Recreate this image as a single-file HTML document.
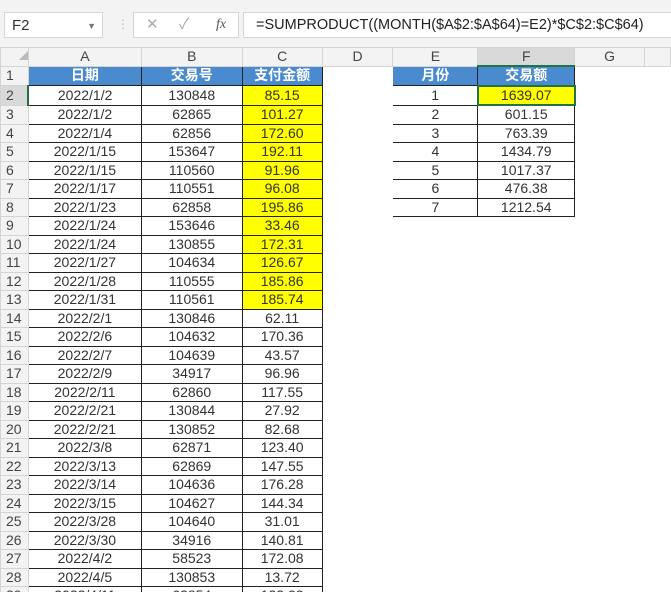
<!DOCTYPE html><html><head><meta charset="utf-8"><style>
body{margin:0;width:671px;height:592px;overflow:hidden;background:#fff;font-family:"Liberation Sans","Noto Sans CJK SC",sans-serif;position:relative}
.top{position:absolute;left:0;top:0;width:671px;height:48px;background:#f3f3f3;border-bottom:1px solid #dadada}
.nb{position:absolute;left:4px;top:12px;width:99px;height:26px;background:#fff;border:1px solid #d6d6d6;font-size:15px;line-height:26px;color:#333;box-sizing:border-box;padding-left:7px}
.nb span{position:absolute;right:6px;top:0;font-size:9px;color:#777}
.ib{position:absolute;left:133px;top:12px;width:106px;height:26px;background:#fff;border:1px solid #d6d6d6;box-sizing:border-box;color:#aaa;font-size:15px;line-height:24px}
.fb{position:absolute;left:243px;top:12px;width:440px;height:26px;background:#fff;border:1px solid #d6d6d6;box-sizing:border-box;font-size:14.5px;line-height:24px;color:#222;padding-left:12px}
.grid{position:absolute;left:0;top:47px;width:671px;height:545px;overflow:hidden}
table{border-collapse:collapse;table-layout:fixed;font-size:14px;color:#333}
td{height:17.5px;padding:0;text-align:center;border:1px solid #fff;white-space:nowrap;overflow:hidden;line-height:17px}
tr.h td{height:17px;background:#f3f3f3;border-color:#d4d4d4;color:#444;font-size:14px}
td.n{background:#f3f3f3;border-color:#d4d4d4;text-align:left;padding-left:5px;color:#444}
td.d{border:1px solid #222}
td.bh{background:#4a8bd0;color:#fff;border:1px solid #222;font-weight:bold}
td.y{background:#ffff00}
</style></head><body>
<div class="top">
<div class="nb">F2<span>▼</span></div>
<div style="position:absolute;left:117px;top:17px;color:#bbb;font-size:12px">⋮</div>
<div class="ib"><span style="position:absolute;left:12px">✕</span><span style="position:absolute;left:45px">✓</span><span style="position:absolute;left:82px;font-style:italic;font-family:'Liberation Serif',serif;color:#555;font-size:14px">fx</span></div>
<div class="fb">=SUMPRODUCT((MONTH($A$2:$A$64)=E2)*$C$2:$C$64)</div>
</div>
<div class="grid"><table>
<colgroup><col style="width:28px"><col style="width:113px"><col style="width:101px"><col style="width:80px"><col style="width:71px"><col style="width:85px"><col style="width:97px"><col style="width:70px"><col style="width:26px"></colgroup>
<tr class="h"><td style="color:#bbb;font-size:9px;text-align:right">◢</td><td>A</td><td>B</td><td>C</td><td>D</td><td>E</td><td style="background:#d9d9d9;border-bottom:2px solid #217346">F</td><td>G</td><td></td></tr>
<tr><td class="n">1</td><td class="bh">日期</td><td class="bh">交易号</td><td class="bh">支付金额</td><td></td><td class="bh">月份</td><td class="bh">交易额</td><td></td><td></td></tr>
<tr><td class="n" style="background:#d9d9d9;border-right:2px solid #217346">2</td><td class="d">2022/1/2</td><td class="d">130848</td><td class="d y">85.15</td><td></td><td class="d">1</td><td class="d y" style="border:2px solid #217346">1639.07</td><td></td><td></td></tr>
<tr><td class="n">3</td><td class="d">2022/1/2</td><td class="d">62865</td><td class="d y">101.27</td><td></td><td class="d">2</td><td class="d">601.15</td><td></td><td></td></tr>
<tr><td class="n">4</td><td class="d">2022/1/4</td><td class="d">62856</td><td class="d y">172.60</td><td></td><td class="d">3</td><td class="d">763.39</td><td></td><td></td></tr>
<tr><td class="n">5</td><td class="d">2022/1/15</td><td class="d">153647</td><td class="d y">192.11</td><td></td><td class="d">4</td><td class="d">1434.79</td><td></td><td></td></tr>
<tr><td class="n">6</td><td class="d">2022/1/15</td><td class="d">110560</td><td class="d y">91.96</td><td></td><td class="d">5</td><td class="d">1017.37</td><td></td><td></td></tr>
<tr><td class="n">7</td><td class="d">2022/1/17</td><td class="d">110551</td><td class="d y">96.08</td><td></td><td class="d">6</td><td class="d">476.38</td><td></td><td></td></tr>
<tr><td class="n">8</td><td class="d">2022/1/23</td><td class="d">62858</td><td class="d y">195.86</td><td></td><td class="d">7</td><td class="d">1212.54</td><td></td><td></td></tr>
<tr><td class="n">9</td><td class="d">2022/1/24</td><td class="d">153646</td><td class="d y">33.46</td><td></td><td></td><td></td><td></td><td></td></tr>
<tr><td class="n">10</td><td class="d">2022/1/24</td><td class="d">130855</td><td class="d y">172.31</td><td></td><td></td><td></td><td></td><td></td></tr>
<tr><td class="n">11</td><td class="d">2022/1/27</td><td class="d">104634</td><td class="d y">126.67</td><td></td><td></td><td></td><td></td><td></td></tr>
<tr><td class="n">12</td><td class="d">2022/1/28</td><td class="d">110555</td><td class="d y">185.86</td><td></td><td></td><td></td><td></td><td></td></tr>
<tr><td class="n">13</td><td class="d">2022/1/31</td><td class="d">110561</td><td class="d y">185.74</td><td></td><td></td><td></td><td></td><td></td></tr>
<tr><td class="n">14</td><td class="d">2022/2/1</td><td class="d">130846</td><td class="d">62.11</td><td></td><td></td><td></td><td></td><td></td></tr>
<tr><td class="n">15</td><td class="d">2022/2/6</td><td class="d">104632</td><td class="d">170.36</td><td></td><td></td><td></td><td></td><td></td></tr>
<tr><td class="n">16</td><td class="d">2022/2/7</td><td class="d">104639</td><td class="d">43.57</td><td></td><td></td><td></td><td></td><td></td></tr>
<tr><td class="n">17</td><td class="d">2022/2/9</td><td class="d">34917</td><td class="d">96.96</td><td></td><td></td><td></td><td></td><td></td></tr>
<tr><td class="n">18</td><td class="d">2022/2/11</td><td class="d">62860</td><td class="d">117.55</td><td></td><td></td><td></td><td></td><td></td></tr>
<tr><td class="n">19</td><td class="d">2022/2/21</td><td class="d">130844</td><td class="d">27.92</td><td></td><td></td><td></td><td></td><td></td></tr>
<tr><td class="n">20</td><td class="d">2022/2/21</td><td class="d">130852</td><td class="d">82.68</td><td></td><td></td><td></td><td></td><td></td></tr>
<tr><td class="n">21</td><td class="d">2022/3/8</td><td class="d">62871</td><td class="d">123.40</td><td></td><td></td><td></td><td></td><td></td></tr>
<tr><td class="n">22</td><td class="d">2022/3/13</td><td class="d">62869</td><td class="d">147.55</td><td></td><td></td><td></td><td></td><td></td></tr>
<tr><td class="n">23</td><td class="d">2022/3/14</td><td class="d">104636</td><td class="d">176.28</td><td></td><td></td><td></td><td></td><td></td></tr>
<tr><td class="n">24</td><td class="d">2022/3/15</td><td class="d">104627</td><td class="d">144.34</td><td></td><td></td><td></td><td></td><td></td></tr>
<tr><td class="n">25</td><td class="d">2022/3/28</td><td class="d">104640</td><td class="d">31.01</td><td></td><td></td><td></td><td></td><td></td></tr>
<tr><td class="n">26</td><td class="d">2022/3/30</td><td class="d">34916</td><td class="d">140.81</td><td></td><td></td><td></td><td></td><td></td></tr>
<tr><td class="n">27</td><td class="d">2022/4/2</td><td class="d">58523</td><td class="d">172.08</td><td></td><td></td><td></td><td></td><td></td></tr>
<tr><td class="n">28</td><td class="d">2022/4/5</td><td class="d">130853</td><td class="d">13.72</td><td></td><td></td><td></td><td></td><td></td></tr>
<tr><td class="n">29</td><td class="d">2022/4/11</td><td class="d">62854</td><td class="d">122.33</td><td></td><td></td><td></td><td></td><td></td></tr>
</table></div>
</body></html>
